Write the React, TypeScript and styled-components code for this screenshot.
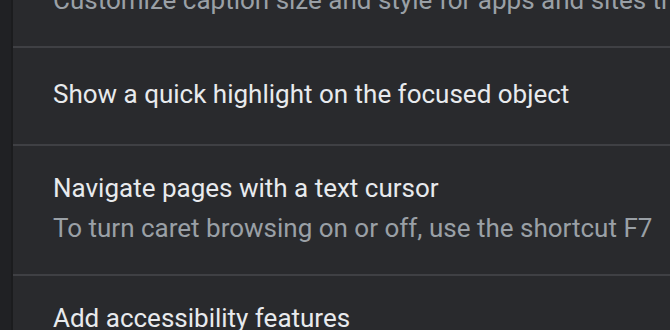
import React from "react";
import styled, { createGlobalStyle } from "styled-components";

const GlobalStyle = createGlobalStyle`
  html, body {
    margin: 0;
    padding: 0;
    background: #202124;
    overflow: hidden;
  }
  body {
    font-family: Roboto, "Liberation Sans", sans-serif;
    -webkit-font-smoothing: antialiased;
  }
`;

const Page = styled.div`
  display: flex;
  width: 670px;
  height: 330px;
  overflow: hidden;
  background: #202124;
`;

const Gutter = styled.div`
  width: 11px;
  flex-shrink: 0;
  background: #202124;
  border-right: 2px solid #1b1c1e;
`;

const Card = styled.div`
  flex: 1;
  background: #292a2d;
  min-width: 0;
`;

const List = styled.div`
  margin-top: -82px;
`;

const Row = styled.div<{ $first?: boolean }>`
  display: flex;
  flex-direction: column;
  justify-content: center;
  min-height: 98px;
  padding: 22px 0 26px 40px;
  box-sizing: border-box;
  border-top: ${(p) => (p.$first ? "none" : "2px solid #3f4044")};
  white-space: nowrap;
`;

const Label = styled.div`
  color: #e8eaed;
  font-size: 26px;
  line-height: 40px;
`;

const SubLabel = styled.div`
  color: #9aa0a6;
  font-size: 26px;
  line-height: 40px;
`;

type Item = { label: string; sub?: string };

const items: Item[] = [
  {
    label: "Captions",
    sub: "Customize caption size and style for apps and sites that support it",
  },
  { label: "Show a quick highlight on the focused object" },
  {
    label: "Navigate pages with a text cursor",
    sub: "To turn caret browsing on or off, use the shortcut F7",
  },
  { label: "Add accessibility features", sub: "Open Chrome Web Store" },
];

const App: React.FC = () => {
  return (
    <>
      <GlobalStyle />
      <Page>
        <Gutter />
        <Card>
          <List>
            {items.map((item, i) => (
              <Row key={item.label} $first={i === 0}>
                <Label>{item.label}</Label>
                {item.sub && <SubLabel>{item.sub}</SubLabel>}
              </Row>
            ))}
          </List>
        </Card>
      </Page>
    </>
  );
};

export default App;
